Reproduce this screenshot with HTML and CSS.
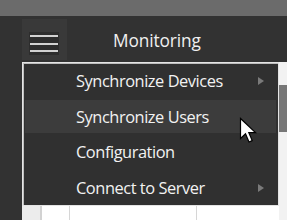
FILE: index.html
```html
<!DOCTYPE html>
<html>
<head>
<meta charset="utf-8">
<link rel="stylesheet" href="styles.css">
</head>
<body>
<div class="app">
  <div class="topbar"></div>
  <div class="header">
    <button class="hamburger" aria-label="Menu">
      <span class="burger-box">
        <span class="line"></span>
        <span class="line"></span>
        <span class="line"></span>
      </span>
    </button>
    <div class="title">Monitoring</div>
  </div>
  <div class="main">
    <div class="sidebar"></div>
    <div class="content">
      <div class="table">
        <div class="col c1"></div>
        <div class="col c2"></div>
        <div class="col c3"></div>
        <div class="col c4"></div>
      </div>
      <div class="scrollbar"><div class="thumb"></div></div>
    </div>
  </div>

  <div class="menu">
    <div class="item">Synchronize Devices<span class="arrow"></span></div>
    <div class="item hover">Synchronize Users</div>
    <div class="item">Configuration</div>
    <div class="item">Connect to Server<span class="arrow"></span></div>
  </div>

  <svg class="cursor" width="20" height="28" viewBox="0 0 20 28">
    <path d="M1.5 1.5 L1.5 21.5 L6.5 16.8 L10 25 L13.2 23.6 L9.8 15.6 L16.5 15.6 Z" fill="#fff" stroke="#000" stroke-width="1.2" stroke-linejoin="miter"/>
  </svg>
</div>
</body>
</html>
```

FILE: styles.css
```css
* { box-sizing: border-box; }
html, body { margin: 0; padding: 0; }
body {
  width: 287px;
  height: 220px;
  overflow: hidden;
  background: #323232;
  font-family: "Open Sans", "Noto Sans", sans-serif;
}
.app {
  position: relative;
  width: 287px;
  height: 220px;
  display: flex;
  flex-direction: column;
}
.topbar {
  height: 16px;
  background: #6b6b6b;
  flex: none;
}
.header {
  height: 46px;
  flex: none;
  display: flex;
  align-items: flex-start;
  padding-left: 22px;
  background: #323232;
}
.hamburger {
  margin: 3px 0 0 0;
  width: 45px;
  height: 41px;
  background: #393939;
  border: none;
  padding: 8px 0 0 7px;
  display: block;
}
.burger-box {
  display: flex;
  flex-direction: column;
  gap: 5.5px;
  width: 30px;
  height: 23px;
  background: #2d2d2d;
  padding: 3px 1px 0 1px;
}
.line {
  display: block;
  height: 2px;
  background: linear-gradient(to bottom, #bdbdbd, #e6e6e6 50%, #bdbdbd);
}
.title {
  margin-left: 46px;
  margin-top: 13px;
  color: #f0f0f0;
  font-size: 17.3px;
  letter-spacing: -0.1px;
  line-height: 24px;
}
.main {
  flex: 1;
  display: flex;
}
.sidebar {
  width: 22px;
  background: #323232;
}
.content {
  flex: 1;
  display: flex;
  background: #ffffff;
}
.table {
  flex: 1;
  display: flex;
}
.col {
  border-right: 1px solid #d6d6d6;
}
.c1 { width: 20px; background: #ececec; border-right: 2px solid #d2d2d2; }
.c2 { width: 28px; }
.c3 { width: 127px; }
.c4 { flex: 1; border-right: none; }
.scrollbar {
  width: 8px;
  background: #f2f2f2;
  padding-top: 23px;
}
.thumb {
  height: 47px;
  background: #777777;
}
.menu {
  position: absolute;
  left: 22px;
  top: 62px;
  width: 257px;
  background: #303030;
  border: 1px solid #e4e4e4;
  box-shadow: inset 1px 1px 0 #bdbdbd;
  padding: 0 2px;
  display: flex;
  flex-direction: column;
}
.item {
  position: relative;
  height: 33.5px;
  margin: 1px 0;
  padding-left: 51px;
  color: #f2f2f2;
  font-size: 16.4px;
  letter-spacing: -0.45px;
  line-height: 33px;
  white-space: nowrap;
}
.item.hover { background: #3c3c3c; }
.arrow {
  position: absolute;
  right: 12px;
  top: 13px;
  width: 0;
  height: 0;
  border-top: 4px solid transparent;
  border-bottom: 4px solid transparent;
  border-left: 6px solid #7a7a7a;
}
.cursor {
  position: absolute;
  left: 239px;
  top: 117px;
}
```
